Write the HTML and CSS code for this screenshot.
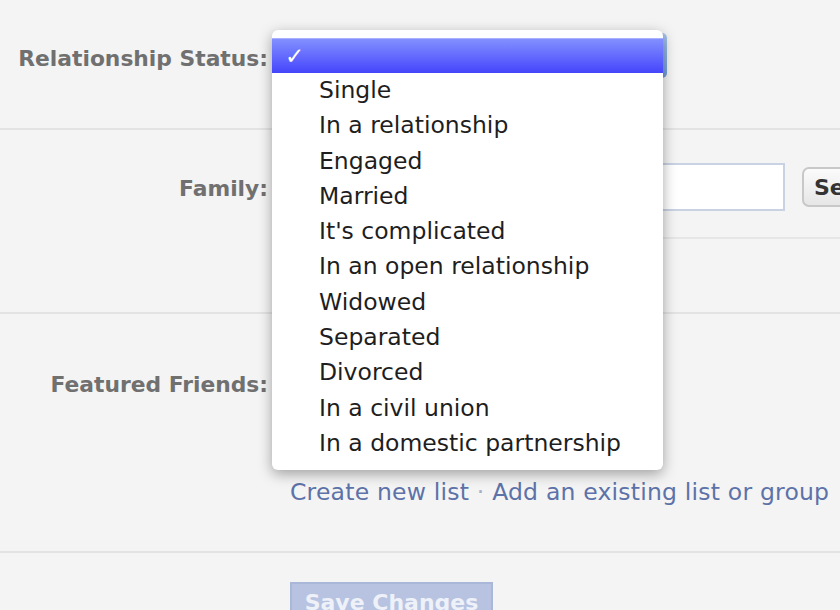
FILE: index.html
```html
<!DOCTYPE html>
<html lang="en">
<head>
  <meta charset="UTF-8">
  <title>Edit Profile - Relationships</title>
  <link rel="stylesheet" href="styles.css">
</head>
<body>

<form class="settings">

  <div class="row status">
    <label class="label">Relationship Status:</label>
    <div class="field">
      <div class="select"></div>
      <!-- open dropdown of the status select -->
      <ul class="menu">
        <li class="selected"><span class="check">✓</span></li>
        <li>Single</li>
        <li>In a relationship</li>
        <li>Engaged</li>
        <li>Married</li>
        <li>It's complicated</li>
        <li>In an open relationship</li>
        <li>Widowed</li>
        <li>Separated</li>
        <li>Divorced</li>
        <li>In a civil union</li>
        <li>In a domestic partnership</li>
      </ul>
    </div>
  </div>

  <div class="row family">
    <label class="label">Family:</label>
    <div class="field">
      <div class="family-input">
        <input type="text" class="text-input">
        <button type="button" class="grey-btn">Select</button>
      </div>
      <div class="subline"></div>
    </div>
  </div>

  <div class="row friends">
    <label class="label">Featured Friends:</label>
    <div class="field">
      <p class="links">
        <a href="#">Create new list</a>
        <span class="dot">·</span>
        <a href="#">Add an existing list or group</a>
      </p>
    </div>
  </div>

  <div class="row actions">
    <div></div>
    <div class="field">
      <button type="button" class="save-btn" disabled>Save Changes</button>
    </div>
  </div>

</form>

</body>
</html>
```

FILE: styles.css
```css
body {
  margin: 0;
  background-color: #f4f4f4;
  font-family: 'DejaVu Sans', Verdana, sans-serif;
  color: #1e1e1e;
  overflow: hidden;
}

.row {
  display: grid;
  grid-template-columns: 270px 1fr;
  align-items: start;
  border-bottom: 2px solid #e3e3e3;
}

.label {
  padding-right: 2px;
  text-align: right;
  font-size: 21.8px;
  font-weight: bold;
  line-height: 30px;
  color: #707070;
}

.field {
  position: relative;
  padding-left: 20px;
}

/* row 1 */
.status {
  height: 128px;
}

.status .label {
  padding-top: 44px;
}

.status .field {
  z-index: 10;
  padding-left: 2px;
}

.select {
  margin-top: 33px;
  width: 395px;
  height: 45px;
  border-radius: 5px;
  background: linear-gradient(#a9c6ee, #6f9ad6);
}

.menu {
  position: absolute;
  top: 30px;
  left: 2px;
  width: 391px;
  margin: 0;
  padding: 8px 0 9px;
  list-style: none;
  background: #fff;
  border-radius: 6px;
  box-shadow: 0 4px 14px rgba(0, 0, 0, 0.35);
  font-size: 23.5px;
}

.menu li {
  height: 35.3px;
  line-height: 35.3px;
  padding-left: 47px;
  white-space: nowrap;
}

.menu .selected {
  height: 35px;
  padding-left: 13px;
  background: linear-gradient(#8290ff, #4545fb);
  border-top: 1px solid #a9b1ff;
  box-sizing: border-box;
  color: #fff;
}

.check {
  font-size: 23px;
  font-weight: bold;
}

/* row 2 */
.family {
  height: 182px;
}

.family .label {
  padding-top: 44px;
}

.family-input {
  display: flex;
  align-items: center;
  gap: 17px;
  margin-top: 33px;
}

.text-input {
  width: 495px;
  height: 48px;
  box-sizing: border-box;
  border: 2px solid #c9d2e3;
  background: #fff;
}

.grey-btn {
  height: 40px;
  padding: 0 10px;
  border: 2px solid #c8c8c8;
  border-radius: 7px;
  background: linear-gradient(#fbfbfb, #e6e6e6);
  font-family: inherit;
  font-size: 22px;
  font-weight: bold;
  color: #333;
  white-space: nowrap;
}

.subline {
  margin-top: 26px;
  height: 2px;
  background: #e6e6e6;
}

/* row 3 */
.friends {
  height: 237px;
}

.friends .label {
  padding-top: 56px;
}

.links {
  margin: 163px 0 0;
  font-size: 23.5px;
  letter-spacing: 0.2px;
  line-height: 30px;
  white-space: nowrap;
}

.links a {
  color: #5d72a8;
  text-decoration: none;
}

.dot {
  color: #a5afc8;
}

/* row 4 */
.actions {
  border-bottom: none;
}

.save-btn {
  margin-top: 29px;
  width: 203px;
  height: 44px;
  padding: 0 0 4px;
  border: 2px solid #a9b7d9;
  background: #b7c3e1;
  font-family: inherit;
  font-size: 22px;
  font-weight: bold;
  color: #eef1f8;
}
```
